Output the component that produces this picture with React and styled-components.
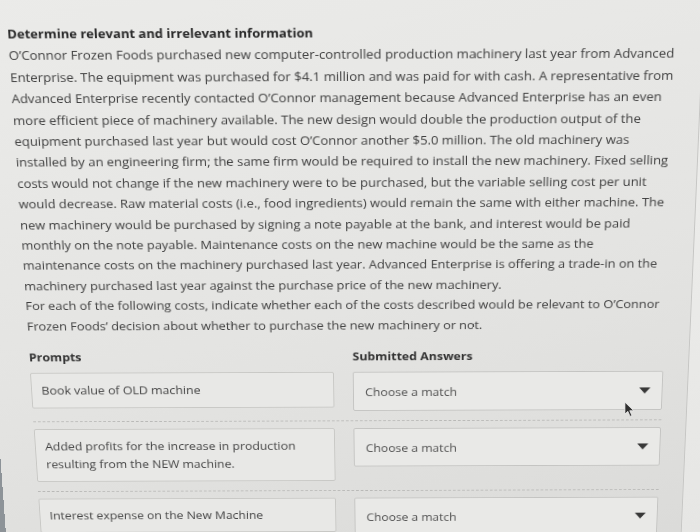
import styled, { createGlobalStyle } from 'styled-components';

const GlobalStyle = createGlobalStyle`
  html, body {
    margin: 0;
    padding: 0;
    width: 700px;
    height: 532px;
    overflow: hidden;
    background: #8d9398;
  }
  * {
    box-sizing: border-box;
  }
`;

const lines = [
  'O\u2019Connor Frozen Foods purchased new computer-controlled production machinery last year from Advanced',
  'Enterprise. The equipment was purchased for $4.1 million and was paid for with cash. A representative from',
  'Advanced Enterprise recently contacted O\u2019Connor management because Advanced Enterprise has an even',
  'more efficient piece of machinery available. The new design would double the production output of the',
  'equipment purchased last year but would cost O\u2019Connor another $5.0 million. The old machinery was',
  'installed by an engineering firm; the same firm would be required to install the new machinery. Fixed selling',
  'costs would not change if the new machinery were to be purchased, but the variable selling cost per unit',
  'would decrease. Raw material costs (i.e., food ingredients) would remain the same with either machine. The',
  'new machinery would be purchased by signing a note payable at the bank, and interest would be paid',
  'monthly on the note payable. Maintenance costs on the new machine would be the same as the',
  'maintenance costs on the machinery purchased last year. Advanced Enterprise is offering a trade-in on the',
  'machinery purchased last year against the purchase price of the new machinery.',
  'For each of the following costs, indicate whether each of the costs described would be relevant to O\u2019Connor',
  'Frozen Foods\u2019 decision about whether to purchase the new machinery or not.',
];

const prompts = [
  ['Book value of OLD machine'],
  ['Added profits for the increase in production', 'resulting from the NEW machine.'],
  ['Interest expense on the New Machine'],
];

function App() {
  return (
    <Page>
      <GlobalStyle />
      <Screen>
        <Main>
          <Title>Determine relevant and irrelevant information</Title>
          <Body>
            {lines.map((l, i) => (
              <Line key={i}>{l}</Line>
            ))}
          </Body>
          <Header>
            <span>Prompts</span>
            <span>Submitted Answers</span>
          </Header>
          {prompts.map((p, i) => (
            <Row key={i}>
              <PromptBox>
                {p.map((t, j) => (
                  <Line key={j}>{t}</Line>
                ))}
              </PromptBox>
              <Select>
                <span>Choose a match</span>
                <Caret viewBox="0 0 12 7">
                  <path d="M0 0 L12 0 L6 7 Z" fill="#383838" />
                </Caret>
              </Select>
            </Row>
          ))}
        </Main>
        <Side />
      </Screen>
      <Cursor viewBox="0 0 12 18">
        <path d="M1 1 L1 14 L4.2 11 L6.6 16.5 L8.6 15.6 L6.3 10.3 L10.6 10.3 Z" fill="#2f2f2f" stroke="#f2f2f2" strokeWidth="0.8" />
      </Cursor>
    </Page>
  );
}

export default App;

const Page = styled.div`
  position: relative;
  width: 700px;
  height: 532px;
  overflow: hidden;
`;

// the photo is taken at an angle, so the page leans away at the bottom
const Screen = styled.div`
  display: flex;
  width: 780px;
  height: 670px;
  margin: -6px 0 0 -33px;
  transform-origin: 383px 6px;
  transform: perspective(1000px) rotateX(-9deg) rotate(-0.2deg) skewX(0.5deg);
  font-family: 'Open Sans', 'Liberation Sans', sans-serif;
  color: #3d3d3d;
`;

const Main = styled.div`
  width: 738px;
  flex: none;
  padding: 28px 0 0 38px;
  background: linear-gradient(165deg, #ebebe9 0%, #e4e4e2 50%, #d9d9d7 100%);
  border-right: 1px solid #c6c6c4;
`;

const Side = styled.div`
  flex: 1;
  background: linear-gradient(180deg, #efefed 0%, #e5e5e3 100%);
`;

const Title = styled.div`
  font-size: 13.1px;
  font-weight: 700;
  line-height: 22.4px;
  color: #2a2a2a;
  white-space: nowrap;
`;

const Body = styled.div`
  font-size: 13.35px;
  line-height: 22.4px;
  color: #3e3e3e;
`;

const Line = styled.div`
  white-space: nowrap;
`;

const Header = styled.div`
  display: grid;
  grid-template-columns: 323px 330px;
  column-gap: 20px;
  margin-top: 14px;
  font-size: 13.1px;
  font-weight: 700;
  line-height: 20px;
  color: #333;
`;

const Row = styled.div`
  display: grid;
  grid-template-columns: 323px 330px;
  column-gap: 20px;
  align-items: start;
  width: 673px;
  padding: 8px 0 11px;
  border-bottom: 1px dashed #b9b9b7;
`;

const PromptBox = styled.div`
  padding: 9px 10px;
  border: 1px solid #c8c8c5;
  border-radius: 2px;
  background: #e8e8e6;
  font-size: 13.2px;
  line-height: 21px;
  color: #454545;
`;

const Select = styled.div`
  display: flex;
  align-items: center;
  justify-content: space-between;
  height: 45px;
  padding: 0 12px 0 12px;
  border: 1px solid #c4c4c2;
  border-radius: 2px;
  background: #e9e9e7;
  font-size: 13.1px;
  color: #525252;
`;

const Caret = styled.svg`
  width: 12px;
  height: 7px;
`;

const Cursor = styled.svg`
  position: absolute;
  left: 624px;
  top: 401px;
  width: 11px;
  height: 17px;
`;
